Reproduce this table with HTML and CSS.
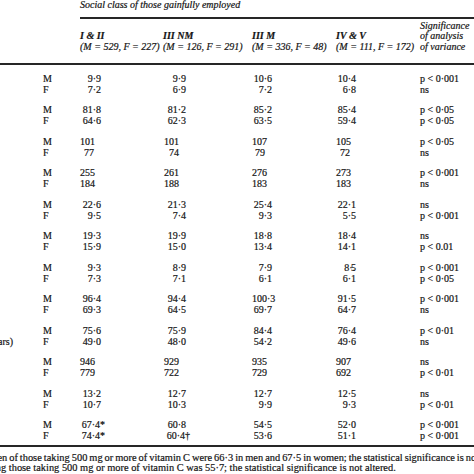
FILE: index.html
```html
<!DOCTYPE html>
<html>
<head>
<meta charset="utf-8">
<link rel="stylesheet" href="styles.css">
</head>
<body>
<div class="page">
  <div class="title">Social class of those gainfully employed</div>
  <div class="rule rule-top"></div>

  <div class="head">
    <span class="lab"></span>
    <span class="sex"></span>
    <div class="hcol"><div class="hname">I &amp; II</div><div>(M = 529, F = 227)</div></div>
    <div class="hcol"><div class="hname">III NM</div><div>(M = 126, F = 291)</div></div>
    <div class="hcol"><div class="hname">III M</div><div>(M = 336, F = 48)</div></div>
    <div class="hcol"><div class="hname">IV &amp; V</div><div>(M = 111, F = 172)</div></div>
    <div class="hsig"><div>Significance</div><div>of analysis</div><div>of variance</div></div>
  </div>
  <div class="rule"></div>

  <div class="body">
    <div class="grp">
      <div class="row"><span class="lab"></span><span class="sex">M</span><span class="n">9·9</span><span class="n">9·9</span><span class="n">10·6</span><span class="n">10·4</span><span class="sig">p &lt; 0·001</span></div>
      <div class="row"><span class="lab"></span><span class="sex">F</span><span class="n">7·2</span><span class="n">6·9</span><span class="n">7·2</span><span class="n">6·8</span><span class="sig">ns</span></div>
    </div>
    <div class="grp">
      <div class="row"><span class="lab"></span><span class="sex">M</span><span class="n">81·8</span><span class="n">81·2</span><span class="n">85·2</span><span class="n">85·4</span><span class="sig">p &lt; 0·05</span></div>
      <div class="row"><span class="lab"></span><span class="sex">F</span><span class="n">64·6</span><span class="n">62·3</span><span class="n">63·5</span><span class="n">59·4</span><span class="sig">p &lt; 0·05</span></div>
    </div>
    <div class="grp">
      <div class="row"><span class="lab"></span><span class="sex">M</span><span class="n i">101</span><span class="n i">101</span><span class="n i">107</span><span class="n i">105</span><span class="sig">p &lt; 0·05</span></div>
      <div class="row"><span class="lab"></span><span class="sex">F</span><span class="n i">77</span><span class="n i">74</span><span class="n i">79</span><span class="n i">72</span><span class="sig">ns</span></div>
    </div>
    <div class="grp">
      <div class="row"><span class="lab"></span><span class="sex">M</span><span class="n i">255</span><span class="n i">261</span><span class="n i">276</span><span class="n i">273</span><span class="sig">p &lt; 0·001</span></div>
      <div class="row"><span class="lab"></span><span class="sex">F</span><span class="n i">184</span><span class="n i">188</span><span class="n i">183</span><span class="n i">183</span><span class="sig">ns</span></div>
    </div>
    <div class="grp">
      <div class="row"><span class="lab"></span><span class="sex">M</span><span class="n">22·6</span><span class="n">21·3</span><span class="n">25·4</span><span class="n">22·1</span><span class="sig">ns</span></div>
      <div class="row"><span class="lab"></span><span class="sex">F</span><span class="n">9·5</span><span class="n">7·4</span><span class="n">9·3</span><span class="n">5·5</span><span class="sig">p &lt; 0·001</span></div>
    </div>
    <div class="grp">
      <div class="row"><span class="lab"></span><span class="sex">M</span><span class="n">19·3</span><span class="n">19·9</span><span class="n">18·8</span><span class="n">18·4</span><span class="sig">ns</span></div>
      <div class="row"><span class="lab"></span><span class="sex">F</span><span class="n">15·9</span><span class="n">15·0</span><span class="n">13·4</span><span class="n">14·1</span><span class="sig">p &lt; 0.01</span></div>
    </div>
    <div class="grp">
      <div class="row"><span class="lab"></span><span class="sex">M</span><span class="n">9·3</span><span class="n">8·9</span><span class="n">7·9</span><span class="n">8·<span class="hang">.</span>5</span><span class="sig">p &lt; 0·001</span></div>
      <div class="row"><span class="lab"></span><span class="sex">F</span><span class="n">7·3</span><span class="n">7·1</span><span class="n">6·1</span><span class="n">6·1</span><span class="sig">p &lt; 0·05</span></div>
    </div>
    <div class="grp">
      <div class="row"><span class="lab"></span><span class="sex">M</span><span class="n">96·4</span><span class="n">94·4</span><span class="n">100·3</span><span class="n">91·5</span><span class="sig">p &lt; 0·001</span></div>
      <div class="row"><span class="lab"></span><span class="sex">F</span><span class="n">69·3</span><span class="n">64·5</span><span class="n">69·7</span><span class="n">64·7</span><span class="sig">ns</span></div>
    </div>
    <div class="grp">
      <div class="row"><span class="lab"></span><span class="sex">M</span><span class="n">75·6</span><span class="n">75·9</span><span class="n">84·4</span><span class="n">76·4</span><span class="sig">p &lt; 0·01</span></div>
      <div class="row"><span class="lab"><span class="labtext">Age (years)</span></span><span class="sex">F</span><span class="n">49·0</span><span class="n">48·0</span><span class="n">54·2</span><span class="n">49·6</span><span class="sig">ns</span></div>
    </div>
    <div class="grp">
      <div class="row"><span class="lab"></span><span class="sex">M</span><span class="n i">946</span><span class="n i">929</span><span class="n i">935</span><span class="n i">907</span><span class="sig">ns</span></div>
      <div class="row"><span class="lab"></span><span class="sex">F</span><span class="n i">779</span><span class="n i">722</span><span class="n i">729</span><span class="n i">692</span><span class="sig">p &lt; 0·01</span></div>
    </div>
    <div class="grp">
      <div class="row"><span class="lab"></span><span class="sex">M</span><span class="n">13·2</span><span class="n">12·7</span><span class="n">12·7</span><span class="n">12·5</span><span class="sig">ns</span></div>
      <div class="row"><span class="lab"></span><span class="sex">F</span><span class="n">10·7</span><span class="n">10·3</span><span class="n">9·9</span><span class="n">9·3</span><span class="sig">p &lt; 0·01</span></div>
    </div>
    <div class="grp">
      <div class="row"><span class="lab"></span><span class="sex">M</span><span class="n">67·4<span class="hang">*</span></span><span class="n">60·8</span><span class="n">54·5</span><span class="n">52·0</span><span class="sig">p &lt; 0·001</span></div>
      <div class="row"><span class="lab"></span><span class="sex">F</span><span class="n">74·4<span class="hang">*</span></span><span class="n">60·4<span class="hang">†</span></span><span class="n">53·6</span><span class="n">51·1</span><span class="sig">p &lt; 0·001</span></div>
    </div>
  </div>
  <div class="rule"></div>

  <div class="notes">
    <div class="fn fn-1"><span class="fnpre"><span>* The means of the group excluding the men and wome</span></span><span>n of those taking 500 mg or more of vitamin C were 66·3 in men and 67·5 in women; the statistical significance is not altered.</span></div>
    <div class="fn"><span class="fnpre fnpre-2"><span>† The mean of the group excluding women amon</span></span><span>g those taking 500 mg or more of vitamin C was 55·7; the statistical significance is not altered.</span></div>
  </div>
</div>
</body>
</html>
```

FILE: styles.css
```css
html, body {
  margin: 0;
  padding: 0;
  background: #ffffff;
}

.page {
  width: 474px;
  height: 474px;
  overflow: hidden;
  font-family: "Liberation Serif", "Times New Roman", serif;
  font-size: 10px;
  color: #141414;
  -webkit-text-stroke: 0.2px #141414;
}

.title {
  padding-left: 80px;
  height: 10px;
  line-height: 10px;
  font-style: italic;
  margin-bottom: 7px;
}

.rule {
  height: 1.6px;
  background: #262626;
}

.rule-top {
  margin-left: 80px;
}

.head {
  display: grid;
  grid-template-columns: 40px 40px 83px 89px 84px 84px 1fr;
  padding-top: 2px;
  padding-bottom: 11px;
  line-height: 10.5px;
  font-style: italic;
}

.hcol {
  align-self: end;
  white-space: nowrap;
}

.hname {
  font-weight: bold;
}

.hsig {
  white-space: nowrap;
}

.body {
  padding-top: 8px;
  display: flex;
  flex-direction: column;
  gap: 9.5px;
  padding-bottom: 4px;
}

.row {
  display: grid;
  grid-template-columns: 40px 40px 83px 89px 84px 84px 1fr;
  height: 11px;
  line-height: 11px;
  white-space: nowrap;
}

.lab {
  display: flex;
  justify-content: flex-end;
  padding-right: 27px;
}

.sex {
  padding-left: 3px;
}

.n {
  text-align: right;
}

.row .n:nth-child(3) { padding-right: 62px; }
.row .n:nth-child(4) { padding-right: 66px; }
.row .n:nth-child(5) { padding-right: 64px; }
.row .n:nth-child(6) { padding-right: 64px; }

.row .n.i:nth-child(3) { padding-right: 69px; }
.row .n.i:nth-child(4) { padding-right: 73px; }
.row .n.i:nth-child(5) { padding-right: 71px; }
.row .n.i:nth-child(6) { padding-right: 70px; }

.hang {
  margin-right: -4px;
}

.notes {
  padding-top: 6px;
}

.fn {
  display: flex;
  white-space: nowrap;
  height: 10.5px;
  line-height: 10.5px;
  font-size: 10.4px;
}

.fn-1 {
  word-spacing: -0.6px;
}

.fnpre {
  display: flex;
  justify-content: flex-end;
  width: 2px;
  flex: none;
}

.fnpre-2 {
  width: 1px;
}
```
